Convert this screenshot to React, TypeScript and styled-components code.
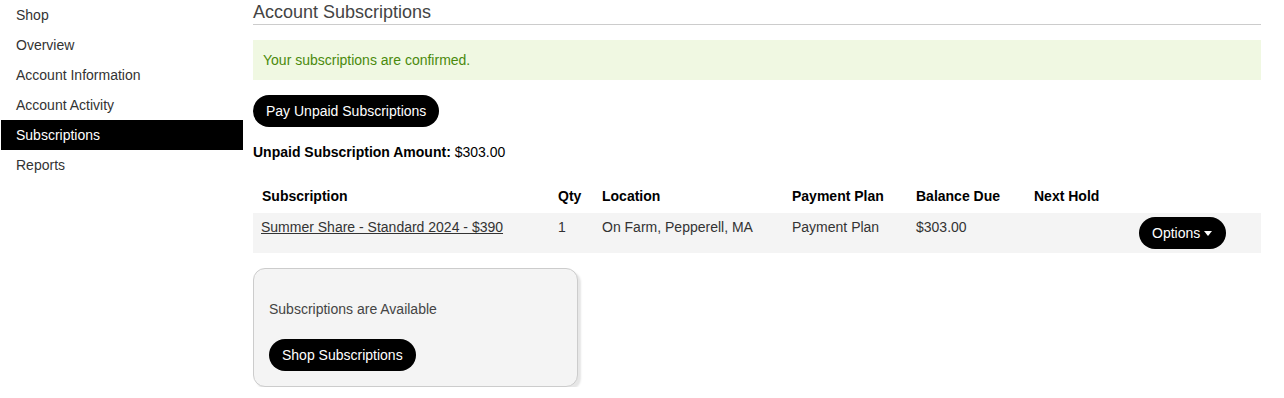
import React from "react";
import styled, { createGlobalStyle } from "styled-components";

const Global = createGlobalStyle`
  html, body { margin: 0; padding: 0; background: #fff; }
  body { font-family: "Liberation Sans", Arial, sans-serif; font-size: 14px; color: #333; }
`;

const Page = styled.div`
  display: flex;
  align-items: flex-start;
  width: 1284px;
`;

const Sidebar = styled.nav`
  width: 242px;
  margin-left: 1px;
  display: flex;
  flex-direction: column;
`;

const NavItem = styled.a<{ $active?: boolean }>`
  display: flex;
  align-items: center;
  height: 30px;
  padding-left: 15px;
  font-size: 14px;
  color: ${(p) => (p.$active ? "#fff" : "#333")};
  background: ${(p) => (p.$active ? "#000" : "transparent")};
  text-decoration: none;
`;

const Main = styled.main`
  width: 1008px;
  margin-left: 10px;
  display: flex;
  flex-direction: column;
  align-items: flex-start;
`;

const Heading = styled.h1`
  align-self: stretch;
  margin: 0;
  font-size: 18px;
  font-weight: normal;
  color: #444;
  line-height: 23px;
  padding-top: 1px;
  border-bottom: 1px solid #ccc;
`;

const Alert = styled.div`
  align-self: stretch;
  margin-top: 15px;
  height: 40px;
  padding: 0 10px;
  display: flex;
  align-items: center;
  background: #f0f8e2;
  color: #4a8a0c;
  font-size: 14px;
`;

const PillButton = styled.button`
  height: 32px;
  padding: 0 13px;
  border: none;
  border-radius: 16px;
  background: #000;
  color: #fff;
  font-family: "Liberation Sans", Arial, sans-serif;
  font-size: 14px;
  display: inline-flex;
  align-items: center;
  gap: 4px;
  cursor: pointer;
`;

const PayButton = styled(PillButton)`
  margin-top: 15px;
`;

const Amount = styled.p`
  margin: 17px 0 0;
  line-height: 17px;
  font-size: 14px;
  color: #000;
  b { font-weight: bold; }
`;

const Table = styled.table`
  margin-top: 19px;
  width: 1008px;
  border-collapse: collapse;
  table-layout: fixed;
  font-size: 14px;
`;

const Th = styled.th`
  text-align: left;
  font-weight: bold;
  color: #000;
  padding: 8px 9px;
  line-height: 17px;
`;

const Row = styled.tr`
  background: #f4f4f4;
`;

const Td = styled.td`
  vertical-align: top;
  padding: 6px 9px;
  line-height: 17px;
  height: 28px;
  color: #333;
`;

const LinkTd = styled(Td)`
  padding-left: 8px;
`;

const ActionTd = styled(Td)`
  padding: 4px 9px;
  height: 32px;
`;

const SubLink = styled.a`
  color: #333;
  text-decoration: underline;
`;

const Caret = styled.span`
  display: inline-block;
  width: 0;
  height: 0;
  border-left: 4px solid transparent;
  border-right: 4px solid transparent;
  border-top: 5px solid #fff;
  margin-top: 1px;
`;

const OptionsButton = styled(PillButton)`
  padding: 0 14px 0 13px;
`;

const Card = styled.div`
  margin-top: 15px;
  width: 293px;
  padding: 30px 15px 15px;
  background: #f4f4f4;
  border: 1px solid #ccc;
  border-radius: 12px;
  box-shadow: 3px 3px 2px #e6e6e6;
`;

const CardText = styled.p`
  margin: 0 0 20px;
  line-height: 20px;
  color: #444;
  font-size: 14px;
`;

const nav = ["Shop", "Overview", "Account Information", "Account Activity", "Subscriptions", "Reports"];

export default function App() {
  return (
    <>
      <Global />
      <Page>
        <Sidebar>
          {nav.map((n) => (
            <NavItem key={n} $active={n === "Subscriptions"} href="#">
              {n}
            </NavItem>
          ))}
        </Sidebar>
        <Main>
          <Heading>Account Subscriptions</Heading>
          <Alert>Your subscriptions are confirmed.</Alert>
          <PayButton>Pay Unpaid Subscriptions</PayButton>
          <Amount>
            <b>Unpaid Subscription Amount:</b> $303.00
          </Amount>
          <Table>
            <colgroup>
              <col style={{ width: 296 }} />
              <col style={{ width: 44 }} />
              <col style={{ width: 190 }} />
              <col style={{ width: 124 }} />
              <col style={{ width: 118 }} />
              <col style={{ width: 105 }} />
              <col style={{ width: 131 }} />
            </colgroup>
            <thead>
              <tr>
                <Th>Subscription</Th>
                <Th>Qty</Th>
                <Th>Location</Th>
                <Th>Payment Plan</Th>
                <Th>Balance Due</Th>
                <Th>Next Hold</Th>
                <Th></Th>
              </tr>
            </thead>
            <tbody>
              <Row>
                <LinkTd>
                  <SubLink href="#">Summer Share - Standard 2024 - $390</SubLink>
                </LinkTd>
                <Td>1</Td>
                <Td>On Farm, Pepperell, MA</Td>
                <Td>Payment Plan</Td>
                <Td>$303.00</Td>
                <Td></Td>
                <ActionTd>
                  <OptionsButton>
                    Options <Caret />
                  </OptionsButton>
                </ActionTd>
              </Row>
            </tbody>
          </Table>
          <Card>
            <CardText>Subscriptions are Available</CardText>
            <PillButton>Shop Subscriptions</PillButton>
          </Card>
        </Main>
      </Page>
    </>
  );
}
